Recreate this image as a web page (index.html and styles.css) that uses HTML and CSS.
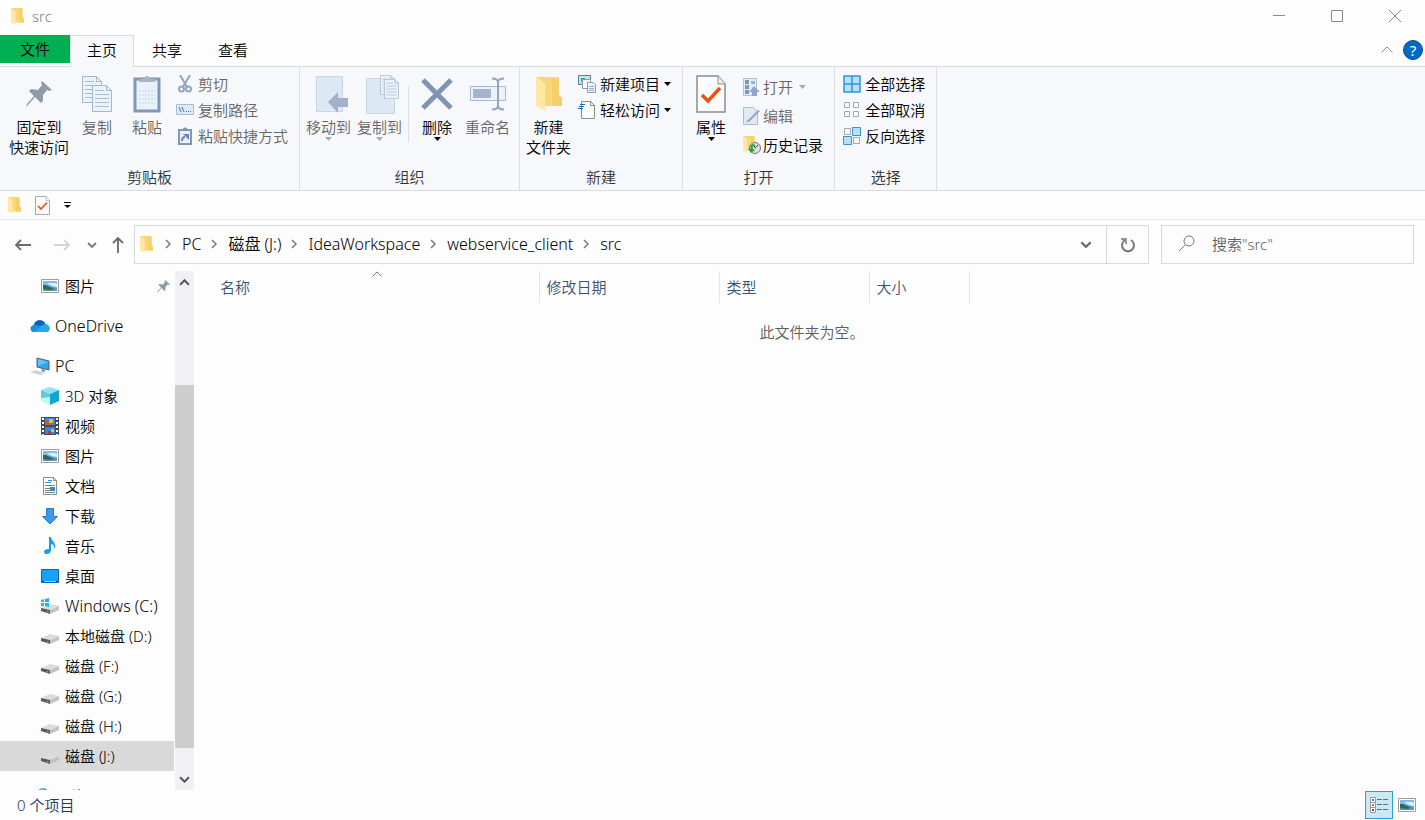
FILE: index.html
```html
<!DOCTYPE html>
<html lang="zh-CN">
<head>
    <meta charset="UTF-8">
    <meta name="viewport" content="width=device-width, initial-scale=1.0">
    <title>src</title>
    <link rel="stylesheet" href="styles.css">
</head>
<body>
    <!-- Icons used more than once -->
    <svg class="symbols" aria-hidden="true">
        <symbol id="folder" viewBox="0 0 13 17">
            <path d="M0 0h11.500v9l1.500 1.500v4H0z" fill="#f8d778"/>
            <path d="M8 1h3.500v8l1.500 1.500v4H8z" fill="#f5cf69"/>
            <path d="M0 0l4.500 3v14L0 14z" fill="#ffe8a6"/>
        </symbol>
        <symbol id="check-doc" viewBox="0 0 30 38">
            <path d="M1 1h21l7 8v28H1z" fill="#fcfcfc" stroke="#8c8c8c" stroke-width="1.5"/>
            <path d="M22 1v8h7" fill="#eee" stroke="#8c8c8c"/>
            <path d="M6 20l6 6 12-13" fill="none" stroke="#e8540f" stroke-width="3.5"/>
        </symbol>
        <symbol id="pin" viewBox="0 0 26 26">
            <path d="M16 0l10 9-3 1-2-1-4 5v6l-2 2-6-6-7 8-2 2 1-3 7-8-5-5 2-2 7 1 4-5-1-2z" fill="#8f9ba6"/>
        </symbol>
        <symbol id="page" viewBox="0 0 20 27">
            <path d="M.5.5h14l5 5v21H.5z" fill="#eaf2fa" stroke="#a5b6cc"/>
            <path d="M14.5.5v5h5" fill="none" stroke="#a5b6cc"/>
            <path d="M3 5.500h9M3 9.500h14M3 13.500h14M3 17.500h14M3 21.500h14" stroke="#a9bcd3" fill="none"/>
        </symbol>
        <symbol id="picture" viewBox="0 0 18 14">
            <path d="M.5.5h17v13H.5z" fill="#fff" stroke="#9c9c9c"/>
            <path d="M2 2h14v10H2z" fill="#7dbcf0"/>
            <path d="M6 4h8l2 1v3l-5-1z" fill="#dff0fb"/>
            <path d="M2 8l6-1 8 2v3H2z" fill="#5b95bd"/>
            <path d="M2 6l3 0 8 4-5 1-6-1z" fill="#31694f"/>
        </symbol>
        <symbol id="drive" viewBox="0 0 18 10">
            <path d="M0 4l9-4 9 2-9 4z" fill="#dcdcdc"/>
            <path d="M9 6l9-4v4l-9 4z" fill="#c2c2c2"/>
            <path d="M0 4l9 2v4L0 7z" fill="#565956"/>
            <path d="M5.500 7.500l2 .5" stroke="#35d04a" stroke-width="1.500"/>
        </symbol>
        <symbol id="crumb" viewBox="0 0 6 10">
            <path d="M1 1l4 4-4 4" fill="none" stroke="#777" stroke-width="1.500"/>
        </symbol>
        <symbol id="down" viewBox="0 0 10 6">
            <path d="M1 1l4 4 4-4" fill="none" stroke="currentColor" stroke-width="1.800"/>
        </symbol>
        <symbol id="up" viewBox="0 0 10 6">
            <path d="M1 5l4-4 4 4" fill="none" stroke="currentColor" stroke-width="1.800"/>
        </symbol>
        <symbol id="arrow" viewBox="0 0 7 4">
            <path d="M0 0h7L3.500 4z" fill="currentColor"/>
        </symbol>
        <symbol id="thin-up" viewBox="0 0 12 7">
            <path d="M.5 6.500L6 1l5.500 5.500" fill="none" stroke="currentColor"/>
        </symbol>
    </svg>

    <header class="titlebar">
        <svg class="folder-icon"><use href="#folder"/></svg>
        <h1>src</h1>
        <div class="window-buttons">
            <button type="button" aria-label="最小化"><svg width="12" height="12"><path d="M0 5.500h12" stroke="#8a8a8a"/></svg></button>
            <button type="button" aria-label="最大化"><svg width="12" height="12"><path d="M.5.5h11v11H.5z" fill="none" stroke="#8a8a8a"/></svg></button>
            <button type="button" aria-label="关闭"><svg width="12" height="12"><path d="M0 0l12 12M12 0L0 12" stroke="#8a8a8a"/></svg></button>
        </div>
    </header>

    <nav class="tabs">
        <button type="button" class="tab tab-file">文件</button>
        <button type="button" class="tab tab-active">主页</button>
        <button type="button" class="tab">共享</button>
        <button type="button" class="tab">查看</button>
        <div class="tabs-right">
            <button type="button" aria-label="折叠功能区"><svg width="12" height="7"><use href="#thin-up"/></svg></button>
            <button type="button" class="help">?</button>
        </div>
    </nav>

    <section class="ribbon">
        <div class="group clipboard">
            <div class="tools">
                <button type="button" class="large">
                    <span class="large-icon"><svg width="26" height="26"><use href="#pin"/></svg></span>
                    固定到<br>快速访问
                </button>
                <button type="button" class="large" disabled>
                    <span class="large-icon">
                        <svg width="30" height="36">
                            <use href="#page" width="20" height="27"/>
                            <use href="#page" x="10" y="9" width="20" height="27"/>
                        </svg>
                    </span>
                    复制
                </button>
                <button type="button" class="large" disabled>
                    <span class="large-icon">
                        <svg width="28" height="38" viewBox="0 0 28 38">
                            <path d="M2 4h24v32H2z" fill="#e9f2fb" stroke="#8296b5" stroke-width="3"/>
                            <path d="M6 16h16M6 20h16M6 24h16M6 28h16" stroke="#c3d3e6" stroke-dasharray="2 1"/>
                            <path d="M6 7V4h5c0-4 6-4 6 0h5v3z" fill="#a9b6ca"/>
                        </svg>
                    </span>
                    粘贴
                </button>
                <div class="small-list">
                    <button type="button" class="small" disabled>
                        <svg width="18" height="18" fill="none" stroke="#93a6c2" stroke-width="2">
                            <path d="M4 0l7 12M14 0L7 12"/><circle cx="5.500" cy="14" r="2.500"/><circle cx="12.500" cy="14" r="2.500"/>
                        </svg>剪切
                    </button>
                    <button type="button" class="small" disabled>
                        <svg width="18" height="18">
                            <path d="M.5 3.500h17v10H.5z" fill="#dce9f6" stroke="#a9bcd3"/>
                            <path d="M3 6l2 5M6 6l2 5M10 10.500h1M12 10.500h1M14 10.500h1" stroke="#5670a0" fill="none"/>
                        </svg>复制路径
                    </button>
                    <button type="button" class="small" disabled>
                        <svg width="18" height="18">
                            <path d="M3 3h12v14H3z" fill="#e9f2fb" stroke="#8296b5" stroke-width="2"/>
                            <path d="M5 4V2h2c0-2 4-2 4 0h2v2z" fill="#8296b5"/>
                            <path d="M6 14c0-3 1-4 3-4" fill="none" stroke="#6d86b0" stroke-width="2"/>
                            <path d="M7 7h6v6z" fill="#6d86b0"/>
                        </svg>粘贴快捷方式
                    </button>
                </div>
            </div>
            <h2>剪贴板</h2>
        </div>

        <div class="group organize">
            <div class="tools">
                <button type="button" class="large" disabled>
                    <span class="large-icon">
                        <svg width="38" height="38" viewBox="-6 0 38 38">
                            <path d="M.5 1.500h26v35H.5z" fill="#dce8f4" stroke="#c6d7e8"/>
                            <path d="M12 27l10-10v6h10v9H22v6z" fill="#a2b1ca"/>
                        </svg>
                    </span>
                    移动到
                    <svg class="arrow"><use href="#arrow"/></svg>
                </button>
                <button type="button" class="large" disabled>
                    <span class="large-icon">
                        <svg width="40" height="39" viewBox="-6 0 40 39">
                            <path d="M.5 3.500h28v35H.5z" fill="#dce8f4" stroke="#c6d7e8"/>
                            <use href="#page" x="14" y="0" width="15" height="20"/>
                            <use href="#page" x="18" y="4" width="15" height="20"/>
                        </svg>
                    </span>
                    复制到
                    <svg class="arrow"><use href="#arrow"/></svg>
                </button>
                <span class="divider"></span>
                <button type="button" class="large">
                    <span class="large-icon"><svg width="32" height="32"><path d="M2 2l28 28M30 2L2 30" stroke="#8093b2" stroke-width="5"/></svg></span>
                    删除
                    <svg class="arrow"><use href="#arrow"/></svg>
                </button>
                <button type="button" class="large" disabled>
                    <span class="large-icon">
                        <svg width="36" height="34">
                            <path d="M.5 9.500h35v14H.5z" fill="#eaf2fb" stroke="#a5bad4"/>
                            <path d="M3 12h18v9H3z" fill="#a5b3cc"/>
                            <path d="M22 1.500c4 0 6 1 6 4v23c0 3-2 4-6 4M34 1.500c-4 0-6 1-6 4v23c0 3 2 4 6 4" fill="none" stroke="#94a5c0" stroke-width="2"/>
                        </svg>
                    </span>
                    重命名
                </button>
            </div>
            <h2>组织</h2>
        </div>

        <div class="group create">
            <div class="tools">
                <button type="button" class="large">
                    <span class="large-icon"><svg width="26" height="34"><use href="#folder"/></svg></span>
                    新建<br>文件夹
                </button>
                <div class="small-list">
                    <button type="button" class="small">
                        <svg width="18" height="18">
                            <path d="M.5.5h12v9H.5z" fill="#c7e5f0" stroke="#3f86a8"/><path d="M3 3h4v4H3z" fill="#4a9a86"/>
                            <path d="M4.500 4.500h8v9h-8z" fill="#f7f7f7" stroke="#999"/>
                            <path d="M9.500 7.500h6l2 2v8h-8z" fill="#edf5fc" stroke="#8c9db0"/>
                            <path d="M11 11.500h5M11 13.500h5M11 15.500h5" stroke="#85b4da"/>
                        </svg>新建项目
                        <svg class="arrow"><use href="#arrow"/></svg>
                    </button>
                    <button type="button" class="small">
                        <svg width="18" height="18">
                            <path d="M3.500.5h9l4 4v13h-13z" fill="#fcfcfc" stroke="#8c8c8c"/><path d="M12.500.5v4h4" fill="none" stroke="#8c8c8c"/>
                            <path d="M2 3.500h5M1 5.500h5M0 7.500h5" stroke="#1d67b5"/>
                        </svg>轻松访问
                        <svg class="arrow"><use href="#arrow"/></svg>
                    </button>
                </div>
            </div>
            <h2>新建</h2>
        </div>

        <div class="group open">
            <div class="tools">
                <button type="button" class="large">
                    <span class="large-icon"><svg width="30" height="38"><use href="#check-doc"/></svg></span>
                    属性
                    <svg class="arrow"><use href="#arrow"/></svg>
                </button>
                <div class="small-list">
                    <button type="button" class="small" disabled>
                        <svg width="18" height="18">
                            <path d="M.5.5h13v17H.5z" fill="#e3edf7" stroke="#b0c2d8"/>
                            <path d="M2 2h4v4H2zM2 7h4v4H2zM2 12h4v4H2z" fill="#7f96b8"/><path d="M8 3h4v3H8z" fill="#9fb2cc"/>
                            <path d="M11 8l6 6h-3v4H9v-4H6z" fill="#93a5c2"/>
                        </svg>打开
                        <svg class="arrow"><use href="#arrow"/></svg>
                    </button>
                    <button type="button" class="small" disabled>
                        <svg width="18" height="18">
                            <path d="M.5.5h10l4 4v13H.5z" fill="#dfeaf5" stroke="#a9bcd3"/>
                            <path d="M3 15L15 3l2 1L6 15z" fill="#93a5c2"/>
                        </svg>编辑
                    </button>
                    <button type="button" class="small">
                        <svg width="18" height="18">
                            <use href="#folder" width="13" height="17"/>
                            <circle cx="12" cy="12" r="5.500" fill="#ddd" stroke="#777"/><path d="M12 12l3-3M12 12l-1-3" stroke="#444"/>
                            <path d="M10 8c-3 1-3 4-2 5l-3 0 3 4 4-3-2-1c-1-2 0-3 2-4z" fill="#25a52f"/>
                        </svg>历史记录
                    </button>
                </div>
            </div>
            <h2>打开</h2>
        </div>

        <div class="group select">
            <div class="tools">
                <div class="small-list">
                    <button type="button" class="small">
                        <svg width="18" height="18"><path d="M1 1h8v8H1zM9 1h8v8H9zM1 9h8v8H1zM9 9h8v8H9z" fill="#b5e0f8" stroke="#3392de" stroke-width="1.500"/></svg>全部选择
                    </button>
                    <button type="button" class="small">
                        <svg width="18" height="18"><path d="M1.500 1.500h5v5h-5zM10.500 1.500h5v5h-5zM1.500 10.500h5v5h-5zM10.500 10.500h5v5h-5z" fill="#fcfcfc" stroke="#a6a6a6"/></svg>全部取消
                    </button>
                    <button type="button" class="small">
                        <svg width="18" height="18">
                            <path d="M1.500 1.500h6v6h-6zM10.500 10.500h6v6h-6z" fill="#fcfcfc" stroke="#a6a6a6"/>
                            <path d="M9.500.5h8v8h-8zM.5 9.500h8v8h-8z" fill="#b5e0f8" stroke="#3392de"/>
                        </svg>反向选择
                    </button>
                </div>
            </div>
            <h2>选择</h2>
        </div>
    </section>

    <div class="quick-access">
        <button type="button" aria-label="新建文件夹"><svg class="folder-icon"><use href="#folder"/></svg></button>
        <button type="button" aria-label="属性"><svg width="15" height="19"><use href="#check-doc"/></svg></button>
        <button type="button" aria-label="自定义快速访问工具栏"><svg width="7" height="6"><path d="M0 .5h7" stroke="#111"/><path d="M0 3h7L3.500 6z" fill="#111"/></svg></button>
    </div>

    <div class="address-row">
        <div class="history">
            <button type="button" aria-label="后退"><svg width="16" height="12" fill="none" stroke="#6b6b6b" stroke-width="1.800"><path d="M16 6H1M6 1L1 6l5 5"/></svg></button>
            <button type="button" aria-label="前进"><svg width="16" height="12" fill="none" stroke="#d4d4d4" stroke-width="1.800"><path d="M0 6h15M10 1l5 5-5 5"/></svg></button>
            <button type="button" class="recent" aria-label="最近浏览的位置"><svg width="10" height="6"><use href="#down"/></svg></button>
            <button type="button" class="parent" aria-label="上移"><svg width="12" height="16" fill="none" stroke="#6b6b6b" stroke-width="1.800"><path d="M6 16V1M1 6l5-5 5 5"/></svg></button>
        </div>
        <div class="address">
            <svg class="folder-icon"><use href="#folder"/></svg>
            <ol>
                <li><svg class="crumb"><use href="#crumb"/></svg><a href="#">PC</a></li>
                <li><svg class="crumb"><use href="#crumb"/></svg><a href="#">磁盘 (J:)</a></li>
                <li><svg class="crumb"><use href="#crumb"/></svg><a href="#">IdeaWorkspace</a></li>
                <li><svg class="crumb"><use href="#crumb"/></svg><a href="#">webservice_client</a></li>
                <li><svg class="crumb"><use href="#crumb"/></svg><a href="#">src</a></li>
            </ol>
            <button type="button" class="drop" aria-label="以前的位置"><svg width="12" height="7"><use href="#down"/></svg></button>
            <button type="button" class="refresh" aria-label="刷新">
                <svg width="16" height="16" fill="none" stroke="#777" stroke-width="2"><path d="M11 3a6 6 0 1 1-6 0"/><path d="M1 2h5v5" stroke-width="1.500"/></svg>
            </button>
        </div>
        <label class="search">
            <svg width="17" height="17" fill="none" stroke="#777"><circle cx="11" cy="6" r="5"/><path d="M7.500 9.500L1 16"/></svg>
            <input type="text" placeholder='搜索"src"' aria-label="搜索">
        </label>
    </div>

    <main>
        <nav class="tree">
            <a href="#" class="child"><svg class="icon"><use href="#picture" y="2" width="18" height="14"/></svg>图片<svg class="pinned" width="13" height="13"><use href="#pin"/></svg></a>
            <a href="#" class="root latin">
                <svg width="20" height="18">
                    <path d="M3 15C-1 14 0 8 4 8c1-6 10-6 11-1 5 0 6 7 2 8z" fill="#1490df"/>
                    <path d="M4 8c1-6 10-6 11-1l-5 2-4-1z" fill="#0f5fb4"/>
                    <path d="M5 15l6-6c2-2 5-2 6-1 4 1 3 7 0 7z" fill="#28a8ea"/>
                </svg>OneDrive
            </a>
            <a href="#" class="root latin">
                <svg width="20" height="18">
                    <path d="M7 1l12 3v9L7 10z" fill="#31a4ee" stroke="#50616f"/>
                    <path d="M8 2l10 3-10 4z" fill="#65c1f7"/>
                    <path d="M12 12l3 1v2l-4-1z" fill="#7c8b97"/>
                    <path d="M0 15l6-2 9 3-5 2z" fill="#cfd3d6"/>
                </svg>PC
            </a>
            <a href="#" class="child">
                <svg class="icon"><path d="M0 3l9-3 9 3-9 4z" fill="#8ee3ef"/><path d="M0 3l9 4v11l-9-4z" fill="#c3f3f6"/><path d="M18 3L9 7v11l9-4z" fill="#10a6ce"/><path d="M0 3l9 4v3l-9 1z" fill="#58ccdd"/></svg>3D 对象
            </a>
            <a href="#" class="child">
                <svg class="icon"><path d="M0 0h18v18H0z" fill="#4a4a4a"/><path d="M4 1h10v7H4zM4 10h10v7H4z" fill="#3f80d8"/><path d="M8 2h4v4H8z" fill="#e6c12e"/><path d="M5 5h3v3H5z" fill="#d4542f"/><path d="M10 12h3v3h-3z" fill="#e6c12e"/><path d="M7 14h3v3H7z" fill="#b23c2b"/><path d="M2 1v17M16 1v17" stroke="#fff" stroke-width="2" stroke-dasharray="2 2"/></svg>视频
            </a>
            <a href="#" class="child"><svg class="icon"><use href="#picture" y="2" width="18" height="14"/></svg>图片</a>
            <a href="#" class="child">
                <svg class="icon"><path d="M2.500.5h10l3 3v14h-13z" fill="#fff" stroke="#8b8b8b"/><path d="M12.500.5v3h3" fill="none" stroke="#8b8b8b"/><path d="M7 3.500h4M4 5.500h6" stroke="#2c90dc"/><path d="M4 8.500h10M4 11.500h5M4 13.500h5M4 15.500h10" stroke="#73828f"/><path d="M9 10h5v4H9z" fill="#3f89b5"/></svg>文档
            </a>
            <a href="#" class="child"><svg class="icon"><path d="M5.500 1.500h7v8h4L9 17 1.500 9.500h4z" fill="#3d98ea" stroke="#2c7ac9"/></svg>下载</a>
            <a href="#" class="child"><svg class="icon"><path d="M8 0h2c0 4 5 4 4 11h-1c0-3-1-4-3-4v6c0 5-7 5-7 2 0-2 2-3 5-3z" fill="#149cf4"/></svg>音乐</a>
            <a href="#" class="child"><svg class="icon"><path d="M.5 2.500h17v13H.5z" fill="#15a2fb" stroke="#0a66bd"/><path d="M1 14.500h16" stroke="#0b4f93"/><path d="M3 14.500h12" stroke="#8ad0ff"/></svg>桌面</a>
            <a href="#" class="child latin"><svg class="icon"><use href="#drive" y="7" width="18" height="10"/><path d="M0 3l3-1v3H0zM4 2l4-1v4H4zM0 6h3v3H0zM4 6h4v4L4 9z" fill="#16b6ef"/></svg>Windows (C:)</a>
            <a href="#" class="child"><svg class="icon"><use href="#drive" y="7" width="18" height="10"/></svg>本地磁盘 (D:)</a>
            <a href="#" class="child"><svg class="icon"><use href="#drive" y="7" width="18" height="10"/></svg>磁盘 (F:)</a>
            <a href="#" class="child"><svg class="icon"><use href="#drive" y="7" width="18" height="10"/></svg>磁盘 (G:)</a>
            <a href="#" class="child"><svg class="icon"><use href="#drive" y="7" width="18" height="10"/></svg>磁盘 (H:)</a>
            <a href="#" class="child selected"><svg class="icon"><use href="#drive" y="7" width="18" height="10"/></svg>磁盘 (J:)</a>
            <a href="#" class="root"><svg width="20" height="18"><circle cx="13" cy="7" r="6" fill="#4aa5d8"/><path d="M9 4l4-2 2 3-4 2z" fill="#c5e8f5"/><path d="M0 10h10v7H0z" fill="#5f7d92"/></svg>网络</a>
        </nav>

        <div class="scrollbar">
            <button type="button" aria-label="向上滚动"><svg width="11" height="7"><use href="#up"/></svg></button>
            <span class="above"></span>
            <span class="thumb"></span>
            <span class="below"></span>
            <button type="button" aria-label="向下滚动"><svg width="11" height="7"><use href="#down"/></svg></button>
        </div>

        <section class="files">
            <table>
                <thead>
                    <tr>
                        <th class="col-name">名称<svg class="sort" width="10" height="6"><use href="#thin-up"/></svg></th>
                        <th class="col-date">修改日期</th>
                        <th class="col-type">类型</th>
                        <th class="col-size">大小</th>
                    </tr>
                </thead>
            </table>
            <p>此文件夹为空。</p>
        </section>
    </main>

    <footer class="statusbar">
        <span>0 个项目</span>
        <div class="views">
            <button type="button" class="view-active" aria-label="详细信息">
                <svg width="18" height="16">
                    <path d="M.5.5h5v15h-5zM.5 5.500h5M.5 10.500h5" fill="#fff" stroke="#999"/>
                    <path d="M2 2h2v2H2z" fill="#2d7fc4"/><path d="M2 7h2v2H2z" fill="#a58a2d"/><path d="M2 12h2v2H2z" fill="#d22e1e"/>
                    <path d="M7 2.500h5M13 2.500h5M7 7.500h5M13 7.500h5M7 12.500h5M13 12.500h5" stroke="#6d6678"/>
                </svg>
            </button>
            <button type="button" aria-label="大图标"><svg width="18" height="14"><use href="#picture"/></svg></button>
        </div>
    </footer>
</body>
</html>
```
FILE: styles.css
```css
* {
    box-sizing: border-box;
}

body {
    display: flex;
    flex-direction: column;
    height: 100vh;
    margin: 0;
    overflow: hidden;
    background: #fdfdfd;
    color: #000;
    font-family: "Noto Sans", "Noto Sans CJK SC", sans-serif;
    font-size: 15px;
    font-weight: 350;
    line-height: 20px;
}

button {
    display: flex;
    align-items: center;
    justify-content: center;
    padding: 0;
    border: 0;
    background: none;
    color: inherit;
    font: inherit;
}

a {
    color: inherit;
    text-decoration: none;
}

svg {
    display: block;
    flex: none;
}

h1, h2, p, ol {
    margin: 0;
    font-size: 15px;
    font-weight: inherit;
}

.symbols {
    position: absolute;
    width: 0;
    height: 0;
}

.folder-icon {
    width: 13px;
    height: 17px;
}

.arrow {
    width: 7px;
    height: 4px;
}

/* Title bar */
.titlebar {
    display: flex;
    align-items: center;
    gap: 8px;
    height: 35px;
    padding: 0 1px 3px 11px;
}

.titlebar h1 {
    color: #808080;
}

.window-buttons {
    display: flex;
    margin-left: auto;
}

.window-buttons button {
    width: 58px;
    height: 32px;
}

/* Tabs */
.tabs {
    display: flex;
    height: 31px;
}

.tab {
    height: 31px;
    padding: 0 18px 2px;
}

.tab-file {
    height: 28px;
    padding: 0 20px;
    background: #00b050;
}

.tab-active {
    position: relative;
    height: 32px;
    padding: 0 16px 3px;
    border: 1px solid #dadbdc;
    border-bottom: 0;
    background: #f6f8fb;
}

.tabs-right {
    display: flex;
    align-items: center;
    gap: 10px;
    margin-left: auto;
    padding: 0 2px 2px 0;
    color: #8a8a8a;
}

.help {
    width: 20px;
    height: 20px;
    border: 1px solid #0a4c8c;
    border-radius: 50%;
    background: #0069c8;
    color: #fff;
    font-weight: 400;
}

/* Ribbon */
.ribbon {
    display: flex;
    height: 125px;
    border-top: 1px solid #dadbdc;
    border-bottom: 1px solid #dadbdc;
    background: #f6f8fb;
}

.group {
    display: flex;
    flex-direction: column;
    justify-content: space-between;
    padding-bottom: 3px;
    border-right: 1px solid #dcdfe3;
}

.group h2 {
    color: #333;
    text-align: center;
}

.tools {
    display: flex;
    padding: 0 11px 0 3px;
}

.clipboard .tools {
    padding-left: 6px;
}

.organize .tools {
    padding-right: 6px;
}

.select .tools {
    padding-left: 4px;
}

.large {
    display: block;
    align-self: flex-start;
    min-width: 50px;
    padding: 7px 3px 0;
    text-align: center;
}

.large-icon {
    display: flex;
    align-items: center;
    justify-content: center;
    height: 40px;
    margin-bottom: 3px;
}

.large .arrow {
    margin: 0 auto;
}

button:disabled {
    color: #666;
}

button:disabled .arrow {
    color: #aaa;
}

.divider {
    width: 1px;
    height: 56px;
    margin: 19px 3px 0;
    background: #dcdfe3;
}

.small-list {
    display: flex;
    flex-direction: column;
    align-items: flex-start;
    padding: 4px 0 0 4px;
}

.small {
    gap: 4px;
    height: 26px;
}

.open .small-list {
    padding: 5px 0 0 7px;
}

.open .small {
    gap: 2px;
    height: 29px;
}

.open .small .arrow {
    margin-left: 4px;
}

/* Quick access toolbar */
.quick-access {
    display: flex;
    align-items: center;
    gap: 14px;
    height: 29px;
    padding-left: 8px;
    border-bottom: 1px solid #e6e6e6;
}

/* Address row */
.address-row {
    display: flex;
    gap: 12px;
    padding: 5px 11px 7px 15px;
}

.history {
    display: flex;
    align-items: center;
    gap: 23px;
    color: #777;
}

.history .recent {
    margin-left: -6px;
}

.history .parent {
    margin-left: -8px;
}

.address {
    display: flex;
    flex: 1;
    align-items: center;
    height: 39px;
    margin-left: -2px;
    padding-left: 5px;
    border: 1px solid #d9d9d9;
}

.address ol {
    display: flex;
    flex: 1;
    gap: 10px;
    padding: 0 0 2px 12px;
    font-size: 16px;
    list-style: none;
}

.address li {
    display: flex;
    align-items: center;
    gap: 11px;
}

.crumb {
    width: 6px;
    height: 10px;
}

.drop {
    width: 40px;
    height: 37px;
    color: #666;
}

.refresh {
    width: 42px;
    height: 37px;
    border-left: 1px solid #d9d9d9;
}

.search {
    display: flex;
    align-items: center;
    gap: 17px;
    width: 253px;
    height: 39px;
    padding: 0 0 2px 16px;
    border: 1px solid #d9d9d9;
}

.search input {
    flex: 1;
    min-width: 0;
    padding: 0;
    border: 0;
    outline: 0;
    background: none;
    color: #111;
    font: inherit;
}

.search input::placeholder {
    color: #5d5d5d;
    opacity: 1;
}

/* Main area */
main {
    display: flex;
    flex: 1;
    min-height: 0;
}

.tree {
    display: flex;
    flex-direction: column;
    width: 174px;
    margin-right: 1px;
    overflow: hidden;
}

.tree a {
    display: flex;
    flex: none;
    align-items: center;
    gap: 6px;
    height: 30px;
    padding-left: 41px;
}

.tree .root {
    gap: 5px;
    margin-top: 10px;
    padding-left: 30px;
}

.tree .latin {
    font-size: 16px;
}

.tree .selected {
    background: #d9d9d9;
}

.icon {
    width: 18px;
    height: 18px;
}

.pinned {
    margin: 0 4px 0 auto;
}

.scrollbar {
    display: flex;
    flex-direction: column;
    width: 19px;
    background: #f1f1f4;
    color: #555;
}

.scrollbar button {
    height: 22px;
}

.above {
    flex: 92;
}

.thumb {
    flex: 364;
    background: #cdcdcd;
}

.below {
    flex: 20;
}

.files {
    flex: 1;
}

table {
    margin-left: 19px;
    border-collapse: collapse;
    table-layout: fixed;
    width: 756px;
}

th {
    position: relative;
    height: 32px;
    padding: 0 0 0 7px;
    border-right: 1px solid #e5e5e5;
    color: #3f536d;
    font-weight: inherit;
    text-align: left;
}

.col-name {
    width: 326px;
}

.col-date {
    width: 180px;
}

.col-type {
    width: 150px;
}

.col-size {
    width: 100px;
}

.sort {
    position: absolute;
    top: 0;
    left: 49%;
    color: #555;
}

.files p {
    margin-top: 19px;
    padding-left: 5px;
    color: #5d5d5d;
    text-align: center;
}

/* Status bar */
.statusbar {
    display: flex;
    align-items: center;
    justify-content: space-between;
    height: 30px;
    padding: 0 9px 0 17px;
    color: #1e395b;
}

.views {
    display: flex;
    gap: 5px;
}

.view-active {
    width: 28px;
    height: 28px;
    border: 1px solid #26a0da;
    background: #cbe8f6;
}
```
